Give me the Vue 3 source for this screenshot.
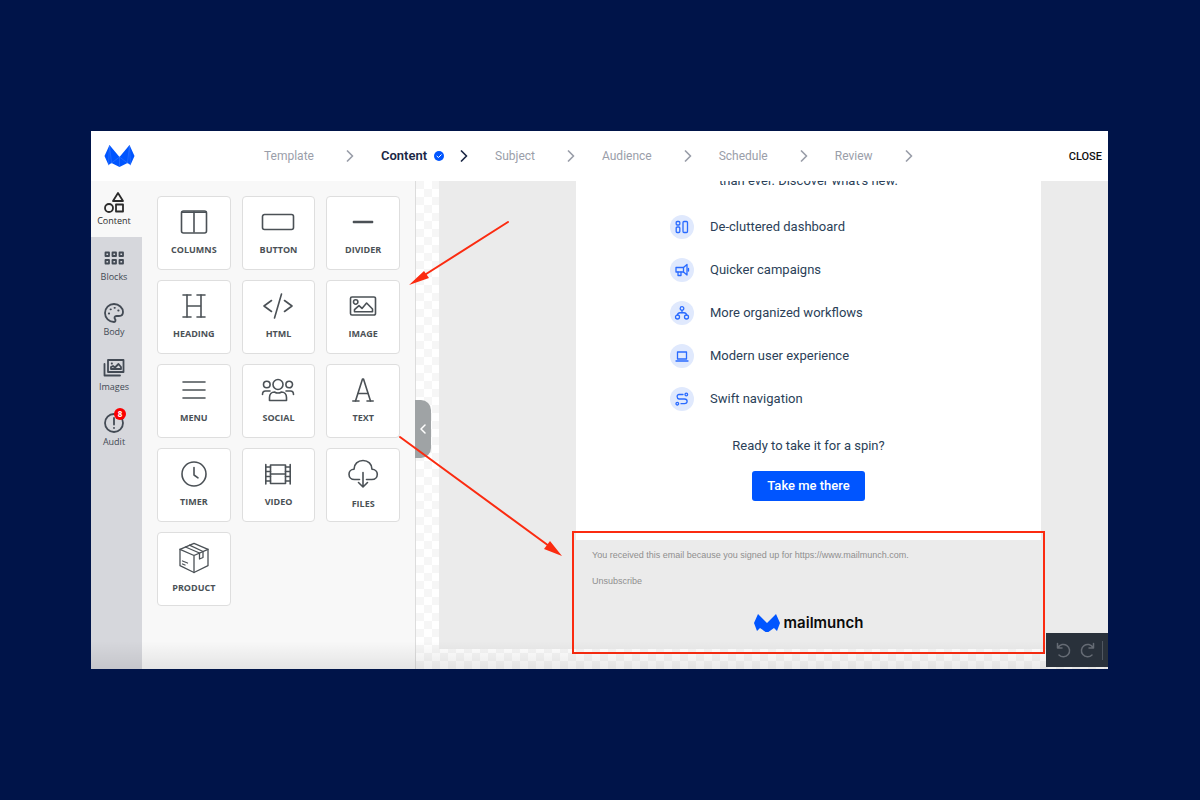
<script setup>
import { ref } from 'vue';

const steps = ['Template', 'Content', 'Subject', 'Audience', 'Schedule', 'Review'];
const currentStep = ref('Content');

const tabs = [
  {
    name: 'Content',
    icon: ['M15 2l5 8H10z', 'M2 17a4 4 0 1 0 8 0a4 4 0 1 0-8 0', 'M13 13.500h7v7h-7z'],
  },
  {
    name: 'Blocks',
    icon: [
      'M2.500 5.500h3.500v3.500h-3.500z', 'M9.500 5.500h3.500v3.500h-3.500z', 'M16.500 5.500h3.500v3.500h-3.500z',
      'M2.500 13h3.500v3.500h-3.500z', 'M9.500 13h3.500v3.500h-3.500z', 'M16.500 13h3.500v3.500h-3.500z',
    ],
  },
  {
    name: 'Body',
    icon: [
      'M11 20C6 20 2 16 2 11s4-9 9-9 9 4 9 8c0 3-2 4-4 4h-2.500c-2 0-2.500 2-1.500 3s.5 3-1 3z',
      'M5.800 11.500h.4M7.500 7.300h.4M11.500 5.800h.4M15.200 8.500h.4',
    ],
  },
  {
    name: 'Images',
    icon: ['M5 3h15.500v12H5z', 'M1.500 7v11.500H17', 'M8 12v-2l2-1 2 1.500L15.500 7l2.500 3v2z', 'M8.700 6.500h.3'],
  },
  {
    name: 'Audit',
    icon: ['M2 11a9 9 0 1 0 18 0a9 9 0 1 0-18 0', 'M11 6v6.500', 'M11 15.800v.3'],
    count: 8,
  },
];
const activeTab = ref('Content');

const tools = [
  { name: 'Columns', icon: ['M6.500 6h21a2 2 0 0 1 2 2v18a2 2 0 0 1-2 2h-21a2 2 0 0 1-2-2V8a2 2 0 0 1 2-2z', 'M17 7v20', 'M5 7.200h24'] },
  { name: 'Button', icon: ['M3.500 9.500h27a2 2 0 0 1 2 2v11a2 2 0 0 1-2 2h-27a2 2 0 0 1-2-2v-11a2 2 0 0 1 2-2z'] },
  { name: 'Divider', icon: ['M7.500 16.500h19', 'M7.500 17.500h19'] },
  { name: 'Heading', icon: ['M6 6h8M20 6h8M6 28h8M20 28h8', 'M10 6v22M24 6v22M10 17h14'] },
  { name: 'HTML', icon: ['M10.500 11.500L3 17l7.500 5.500', 'M23.500 11.500L31 17l-7.500 5.500', 'M20.500 5l-7 24'] },
  {
    name: 'Image',
    icon: [
      'M6 8h22a1.500 1.500 0 0 1 1.500 1.500v15A1.500 1.500 0 0 1 28 26H6a1.500 1.500 0 0 1-1.500-1.500v-15A1.500 1.500 0 0 1 6 8z',
      'M7.500 13a2.200 2.200 0 1 0 4.400 0a2.200 2.200 0 1 0-4.400 0',
      'M8.500 22.700v-2l4.500-4 3 2.700 4.600-5.400 5.900 6v2.700z',
    ],
  },
  { name: 'Menu', icon: ['M6 9h22M6 17h22M6 25h22'] },
  {
    name: 'Social',
    icon: [
      'M12 11.500a5 5 0 1 0 10 0a5 5 0 1 0-10 0',
      'M8.500 27.500v-3c0-3 2-5.500 5-5.500 2 1.200 5 1.200 7 0 3 0 5 2.500 5 5.500v3z',
      'M2.500 11.500a3.300 3.300 0 1 0 6.600 0a3.300 3.300 0 1 0-6.600 0',
      'M24.900 11.500a3.300 3.300 0 1 0 6.600 0a3.300 3.300 0 1 0-6.600 0',
      'M1.500 21.500c0-2 1-3.500 3-3.500h4.500', 'M32.500 21.500c0-2-1-3.500-3-3.500H25',
    ],
  },
  { name: 'Text', icon: ['M9.500 28L16.500 6h1l7 22', 'M6.800 28h6.200M21 28h6.200M12 20.500h10'] },
  { name: 'Timer', icon: ['M5 17a12 12 0 1 0 24 0a12 12 0 1 0-24 0', 'M17 10.500v7.500l4 2.800'] },
  {
    name: 'Video',
    icon: [
      'M9.500 8h15v18.500h-15z', 'M9.500 17h15',
      'M4.800 7.500v19.500M29.200 7.500v19.500',
      'M4.800 10h4.700M4.800 14.500h4.700M4.800 19.500h4.700M4.800 24h4.700',
      'M24.500 10h4.700M24.500 14.500h4.700M24.500 19.500h4.700M24.500 24h4.700',
    ],
  },
  {
    name: 'Files',
    tall: true,
    icon: [
      'M13.500 22.500H8.500C5 22.500 3 20 3 17.200c0-2.700 2-4.900 5-5C8 7 12 3.500 17 3.500s9 3.500 9 8.700c3 .1 5.300 2.300 5.300 5 0 2.800-2 5.300-5.500 5.300H20.500',
      'M17 15.500v14M12.500 25.500l4.500 4.500 4.500-4.500',
    ],
  },
  {
    name: 'Product',
    tall: true,
    thin: true,
    icon: [
      'M17 2.300l14 6v16.400l-14 6.800-14-6.800V8.300z', 'M3 8.300l14 6.200 14-6.200M17 14.500v17',
      'M12.500 4.200l13.500 6.300v6l-3.500 1.500v-6L8.500 6', 'M5.500 20l5 2M5.500 23l2.500 1',
    ],
  },
];

const features = [
  {
    text: 'De-cluttered dashboard',
    icon: [
      'M3.200 2.500h1.600a1 1 0 0 1 1 1v1.500a1 1 0 0 1-1 1H3.200a1 1 0 0 1-1-1V3.500a1 1 0 0 1 1-1z',
      'M3.200 8h1.600a1 1 0 0 1 1 1v3.500a1 1 0 0 1-1 1H3.200a1 1 0 0 1-1-1V9a1 1 0 0 1 1-1z',
      'M10 2.500h2.500a1 1 0 0 1 1 1v9a1 1 0 0 1-1 1H10a1 1 0 0 1-1-1v-9a1 1 0 0 1 1-1z',
    ],
  },
  { text: 'Quicker campaigns', icon: ['M2 5.500h7.500v4.500H2z', 'M9.500 5.500l3.500-3v10.500l-3.500-3M14.500 6.500v2.500', 'M4 10v3.500h3V10'] },
  {
    text: 'More organized workflows',
    icon: [
      'M6.200 3.500a1.800 1.800 0 1 0 3.600 0a1.800 1.800 0 1 0-3.600 0',
      'M1.500 12a2 2 0 1 0 4 0a2 2 0 1 0-4 0',
      'M10.500 12a2 2 0 1 0 4 0a2 2 0 1 0-4 0',
      'M8 5.500V8M3.500 10c0-2 2-2.500 4.500-2.500s4.500.5 4.500 2.500',
    ],
  },
  { text: 'Modern user experience', icon: ['M3.500 4h9v7h-9z', 'M2 13h12'] },
  {
    text: 'Swift navigation',
    icon: [
      'M11 3.500a1.300 1.300 0 1 0 2.600 0a1.300 1.300 0 1 0-2.600 0',
      'M2 12.700a1.300 1.300 0 1 0 2.600 0a1.300 1.300 0 1 0-2.600 0',
      'M9 3.500H5C2.500 3.500 2.500 7.500 5 8h5.500c3.500 0 3.500 4.700 0 4.700H7',
    ],
  },
];
</script>

<template>
  <main class="stage">
    <div class="window">
      <header class="topbar">
        <svg class="logo" viewBox="0 0 30 22">
          <path class="brand" d="M5 0l10 12L25 0l5 11-4 9-3-2-8 4-8-4-3 2-4-9z" />
          <path class="facets" d="M5 0L4 20M5 0l2 18M25 0l1 20M25 0l-2 18M7 18l8-6 8 6M15 12v10" />
        </svg>
        <nav class="steps">
          <a
            v-for="step in steps"
            :key="step"
            href="#"
            class="step"
            :class="{ current: step === currentStep }"
            @click.prevent="currentStep = step"
          >
            <span>{{ step }}</span>
            <svg v-if="step === currentStep" class="check" viewBox="0 0 10 10">
              <circle cx="5" cy="5" r="5" />
              <path d="M3 5.200l1.500 1.300L7.200 3.800" />
            </svg>
            <svg class="chevron" viewBox="0 0 8 12"><path d="M1.500 1l5 5-5 5" /></svg>
          </a>
        </nav>
        <button class="close" type="button">CLOSE</button>
      </header>

      <div class="workspace">
        <nav class="rail">
          <button
            v-for="tab in tabs"
            :key="tab.name"
            type="button"
            class="tab"
            :class="{ active: tab.name === activeTab }"
            @click="activeTab = tab.name"
          >
            <svg class="tab-icon" viewBox="0 0 22 22">
              <path v-for="d in tab.icon" :key="d" :d="d" />
            </svg>
            <span>{{ tab.name }}</span>
            <span v-if="tab.count" class="count">{{ tab.count }}</span>
          </button>
        </nav>

        <section class="panel">
          <div class="tools">
            <button
              v-for="tool in tools"
              :key="tool.name"
              type="button"
              class="tool"
              :class="{ tall: tool.tall, thin: tool.thin }"
            >
              <svg class="tool-icon" viewBox="0 0 34 34">
                <path v-for="d in tool.icon" :key="d" :d="d" />
              </svg>
              <span>{{ tool.name }}</span>
            </button>
          </div>
        </section>

        <section class="canvas">
          <button class="collapse" type="button" aria-label="Collapse panel">
            <svg viewBox="0 0 6 10"><path d="M5 1L1 5l4 4" /></svg>
          </button>

          <div class="backdrop">
            <article class="email">
              <p class="intro">than ever. Discover what's new.</p>
              <ul class="features">
                <li v-for="feature in features" :key="feature.text">
                  <span class="bubble">
                    <svg viewBox="0 0 16 16">
                      <path v-for="d in feature.icon" :key="d" :d="d" />
                    </svg>
                  </span>
                  {{ feature.text }}
                </li>
              </ul>
              <p class="ready">Ready to take it for a spin?</p>
              <a class="cta" href="#">Take me there</a>
              <footer class="footer">
                <p>You received this email because you signed up for https://www.mailmunch.com.</p>
                <a href="#">Unsubscribe</a>
                <div class="signature">
                  <svg viewBox="0 0 26 18">
                    <path class="brand" d="M4 0l9 9 9-9 4 9-3 8-3-3-7 5-7-5-3 3-3-8z" />
                  </svg>
                  <span>mailmunch</span>
                </div>
                <div class="highlight"></div>
              </footer>
            </article>
          </div>

          <div class="history">
            <button type="button" aria-label="Undo">
              <svg viewBox="0 0 16 16"><path d="M1.500 1.500V6h4.500M2 5.500a6.200 6.200 0 1 1 1 7.500" /></svg>
            </button>
            <button type="button" aria-label="Redo">
              <svg viewBox="0 0 16 16"><path d="M14.500 1.500V6H10M14 5.500a6.200 6.200 0 1 0-1 7.500" /></svg>
            </button>
            <span class="separator"></span>
          </div>
        </section>
      </div>

      <div class="shade"></div>

      <svg class="arrows" viewBox="0 0 480 440">
        <path class="shaft" d="M417 91L332 145M309 306L458 415" />
        <path class="head" d="M318 154l15-14 5 7zM471 425l-18-7 6-8z" />
      </svg>
    </div>
  </main>
</template>

<style>
body {
  margin: 0;
  background: #001449;
}
</style>

<style scoped>
.stage {
  box-sizing: border-box;
  min-height: 100vh;
  padding: 131px 92px 131px 91px;
  display: flex;
  background: #001449;
  font-family: Roboto, sans-serif;
}

.window {
  flex: 1;
  min-width: 0;
  display: flex;
  flex-direction: column;
  position: relative;
  overflow: hidden;
  background: #fff;
}

button {
  border: 0;
  padding: 0;
  background: none;
  font: inherit;
  color: inherit;
  cursor: pointer;
}

a {
  color: inherit;
  text-decoration: none;
}

p {
  margin: 0;
}

svg {
  display: block;
  fill: none;
  stroke-linecap: round;
  stroke-linejoin: round;
}

.brand {
  fill: #0055ff;
}

/* top bar */
.topbar {
  height: 50px;
  padding: 0 6px 0 13px;
  display: flex;
  align-items: center;
}

.logo {
  width: 31px;
  height: 22px;
}

.facets {
  stroke: #4d88ff;
  stroke-width: 0.4;
}

.steps {
  margin-left: 129px;
  flex: 1;
  display: flex;
  gap: 27px;
}

.step {
  display: flex;
  align-items: center;
  color: #9a9ea9;
  font-size: 12px;
  line-height: 16px;
}

.step.current {
  color: #1b2745;
  font-size: 13px;
  font-weight: 600;
}

.chevron {
  width: 8px;
  height: 12px;
  margin-left: 32px;
  stroke: currentColor;
  stroke-width: 1.7;
}

.check {
  width: 10px;
  height: 10px;
  margin-left: 7px;
}

.check circle {
  fill: #0055ff;
}

.check path {
  stroke: #fff;
}

.check + .chevron {
  margin-left: 16px;
}

.close {
  color: #111;
  font-size: 11px;
  font-weight: 500;
}

/* left rail */
.workspace {
  flex: 1;
  display: flex;
  min-height: 0;
}

.rail {
  width: 51px;
  flex: none;
  display: flex;
  flex-direction: column;
  background: #d6d7dc;
}

.tab {
  position: relative;
  height: 55px;
  display: flex;
  flex-direction: column;
  align-items: center;
  justify-content: center;
  gap: 2px;
  padding-right: 5px;
  color: #434a54;
  font-family: 'Open Sans', sans-serif;
  font-size: 9px;
  line-height: 12px;
}

.tab.active {
  height: 56px;
  background: #f8f8f8;
  color: #2b2b2b;
}

.tab-icon {
  width: 22px;
  height: 22px;
  stroke: currentColor;
  stroke-width: 1.8;
}

.count {
  position: absolute;
  top: 6px;
  right: 16px;
  width: 12px;
  height: 12px;
  border-radius: 50%;
  background: #fa0000;
  color: #fff;
  font-size: 8px;
  font-weight: 700;
}

/* content panel */
.panel {
  box-sizing: border-box;
  width: 274px;
  flex: none;
  padding: 15px;
  border-right: 1px solid #dcdcdc;
  background: #f8f8f8;
}

.tools {
  display: grid;
  grid-template-columns: repeat(3, 1fr);
  gap: 10px 11px;
}

.tool {
  box-sizing: border-box;
  height: 74px;
  padding-top: 8px;
  display: flex;
  flex-direction: column;
  align-items: center;
  gap: 4px;
  border: 1px solid #dedede;
  border-radius: 4px;
  background: #fff;
  color: #4b5156;
  font-family: 'Open Sans', sans-serif;
  font-size: 9px;
  font-weight: 700;
  line-height: 14px;
  text-transform: uppercase;
}

.tool.tall {
  gap: 6px;
}

.tool-icon {
  width: 34px;
  height: 34px;
  flex: none;
  stroke: currentColor;
  stroke-width: 1.6;
}

.thin .tool-icon {
  stroke-width: 1.3;
}

/* email canvas */
.canvas {
  flex: 1;
  min-width: 0;
  position: relative;
  padding: 0 0 20px 23px;
  display: flex;
  background: repeating-conic-gradient(#fff 0 25%, #f6f6f6 0 50%) 0 0 / 16px 16px;
}

.collapse {
  position: absolute;
  left: -1px;
  top: 219px;
  width: 16px;
  height: 58px;
  display: grid;
  place-items: center;
  border-radius: 0 10px 10px 0;
  background: #9fa3a5;
}

.collapse svg {
  width: 6px;
  height: 10px;
  stroke: #fff;
  stroke-width: 1.5;
}

.backdrop {
  flex: 1;
  min-width: 0;
  display: flex;
  padding: 0 67px 0 137px;
  background: #ebebeb;
}

.email {
  flex: 1;
  min-width: 0;
  display: flex;
  flex-direction: column;
  align-items: center;
  background: #fff;
  color: #2b3f58;
  font-size: 13px;
  line-height: 18px;
}

/* last line of a paragraph scrolled under the top bar */
.intro {
  height: 8px;
  line-height: 0;
  overflow: hidden;
}

.features {
  align-self: stretch;
  margin: 26px 0 0;
  padding: 0 0 0 94px;
  display: flex;
  flex-direction: column;
  gap: 19px;
  list-style: none;
}

.features li {
  display: flex;
  align-items: center;
  gap: 16px;
}

.bubble {
  width: 24px;
  height: 24px;
  display: grid;
  place-items: center;
  border-radius: 50%;
  background: #e0e9fd;
}

.bubble svg {
  width: 16px;
  height: 16px;
  stroke: #2a6bff;
  stroke-width: 1.3;
}

.ready {
  margin-top: 26px;
}

.cta {
  margin: 16px 0 39px;
  padding: 6px 15px;
  border-radius: 3px;
  background: #0055ff;
  color: #fff;
  font-weight: 500;
}

.footer {
  position: relative;
  align-self: stretch;
  flex: 1;
  padding: 9px 16px 0;
  background: #ebebeb;
  color: #8f8f8f;
  font-family: 'Liberation Sans', Arial, sans-serif;
  font-size: 9px;
  line-height: 13px;
}

.footer p {
  margin-bottom: 13px;
}

.footer a {
  display: block;
}

.signature {
  margin-top: 25px;
  display: flex;
  align-items: center;
  justify-content: center;
  gap: 4px;
  color: #0b0b0b;
  font-family: Inter, sans-serif;
  font-size: 15px;
  font-weight: 600;
  line-height: 20px;
}

.signature svg {
  width: 26px;
  height: 18px;
}

.highlight {
  position: absolute;
  inset: -9px -4px -5px -4px;
  border: 2px solid #fb2b10;
}

.history {
  position: absolute;
  right: 0;
  bottom: 2px;
  z-index: 1;
  height: 34px;
  padding: 0 5px 0 10px;
  display: flex;
  align-items: center;
  gap: 7px;
  background: #29313b;
  color: #656b74;
}

.history svg {
  width: 16px;
  height: 16px;
  stroke: currentColor;
  stroke-width: 1.5;
}

.separator {
  width: 1px;
  height: 19px;
  background: #505761;
}

/* fade along the bottom edge */
.shade {
  position: absolute;
  left: 0;
  right: 0;
  bottom: 0;
  height: 28px;
  background: linear-gradient(transparent, rgba(0, 0, 0, 0.08));
  pointer-events: none;
}

.arrows {
  position: absolute;
  left: 0;
  top: 0;
  width: 480px;
  height: 440px;
  pointer-events: none;
}

.shaft {
  stroke: #fb2b10;
  stroke-width: 2;
}

.head {
  fill: #fb2b10;
}
</style>
